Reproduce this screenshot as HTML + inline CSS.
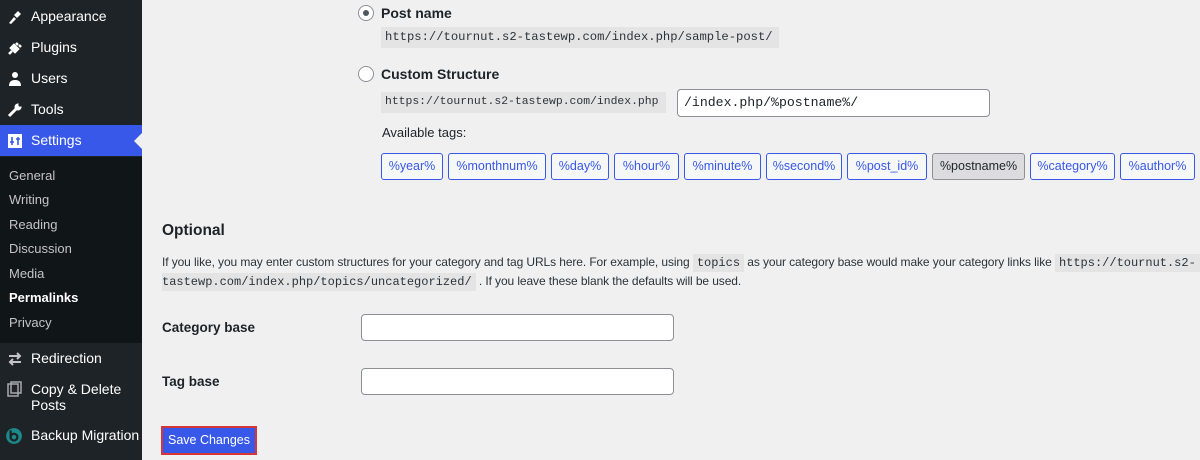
<!DOCTYPE html>
<html><head><meta charset="utf-8"><style>
*{box-sizing:border-box;margin:0;padding:0}
body{width:1200px;height:460px;overflow:hidden;background:#f0f0f1;font-family:"Liberation Sans",sans-serif;color:#1d2327;position:relative;font-size:13px}
.sb{position:absolute;left:0;top:0;width:142px;height:460px;background:#1d2327}
.mi{position:absolute;left:0;width:142px;color:#fff;font-size:14px;height:31px;line-height:31px;padding-left:31px}
.ic{position:absolute;left:7px;top:8px;width:16px;height:16px}
.sub{position:absolute;left:0;top:157px;width:142px;height:186px;background:#101517}
.si{position:absolute;left:9px;color:#c3c4c7;font-size:13px}
.a{position:absolute;white-space:nowrap}
code,.mono{font-family:"Liberation Mono",monospace;font-size:12.2px;white-space:nowrap}
.code{position:absolute;background:#e4e4e5;padding:0 4px;height:21px;line-height:21px;color:#2c3338}
.tag{position:absolute;top:153px;height:27px;border:1px solid #3858e9;border-radius:3px;background:#f6f7f7;color:#3858e9;font-size:12.5px;line-height:25px;text-align:center;white-space:nowrap}
.inp{position:absolute;background:#fff;border:1px solid #8c8f94;border-radius:4px}
.radio{position:absolute;width:16px;height:16px;border:1px solid #8c8f94;border-radius:50%;background:#fff}
</style></head><body>
<div class="sb">
 <div class="mi" style="top:1px"><svg class="ic" viewBox="0 0 16 16"><path d="M2 14l5-6 2 2-5 5zM7 6l4-4 3 3-4 4z" fill="#fff"/></svg>Appearance</div>
 <div class="mi" style="top:32px"><svg class="ic" viewBox="0 0 16 16"><path d="M2 14l3-3M4 8l4 4 3-3-4-4zM9 3l2 2M12 5l2 2" stroke="#fff" stroke-width="2.5" fill="#fff"/></svg>Plugins</div>
 <div class="mi" style="top:63px"><svg class="ic" viewBox="0 0 16 16"><circle cx="8" cy="4" r="3" fill="#fff"/><path d="M2 15c0-5 3-6 6-6s6 1 6 6z" fill="#fff"/></svg>Users</div>
 <div class="mi" style="top:94px"><svg class="ic" viewBox="0 0 16 16"><path d="M2 14l7-7" stroke="#fff" stroke-width="3"/><circle cx="11" cy="5" r="3.5" fill="#fff"/><circle cx="13" cy="3" r="1.6" fill="#1d2327"/></svg>Tools</div>
 <div class="mi" style="top:125px;background:#3858e9"><svg class="ic" viewBox="0 0 16 16"><rect x="1" y="1" width="14" height="14" fill="#fff"/><path d="M5 4v8M3 9h4M11 4v8M9 6h4" stroke="#3858e9" stroke-width="1.6"/></svg>Settings</div>
 <div style="position:absolute;left:134px;top:133px;width:0;height:0;border-top:8px solid transparent;border-bottom:8px solid transparent;border-right:8px solid #f0f0f1"></div>
 <div class="sub">
  <div class="si" style="top:11px">General</div>
  <div class="si" style="top:35px">Writing</div>
  <div class="si" style="top:60px">Reading</div>
  <div class="si" style="top:84px">Discussion</div>
  <div class="si" style="top:109px">Media</div>
  <div class="si" style="top:133px;color:#fff;font-weight:bold">Permalinks</div>
  <div class="si" style="top:158px">Privacy</div>
 </div>
 <div class="mi" style="top:343px"><svg class="ic" viewBox="0 0 16 16"><path d="M2 5h11M10 2l3 3-3 3M14 11H3M6 8l-3 3 3 3" stroke="#c3c4c7" stroke-width="2" fill="none"/></svg>Redirection</div>
 <div class="mi" style="top:374px;line-height:16px;height:40px;padding-top:7px"><svg class="ic" viewBox="0 0 16 16" style="top:7px"><rect x="1" y="3" width="10" height="12" fill="none" stroke="#a7aaad" stroke-width="1.5"/><rect x="4" y="1" width="10" height="11" fill="none" stroke="#a7aaad" stroke-width="1.5"/></svg>Copy &amp; Delete<br>Posts</div>
 <div class="mi" style="top:420px"><svg class="ic" viewBox="0 0 16 16" style="left:5px;width:18px;height:18px;top:7px"><circle cx="8" cy="8" r="7" fill="#1c8a8a"/><circle cx="8" cy="9" r="3" fill="none" stroke="#1d2327" stroke-width="2"/><path d="M5 3v6" stroke="#1d2327" stroke-width="2"/></svg>Backup Migration</div>
</div>

<div class="radio" style="left:358px;top:5px"><div style="position:absolute;left:4px;top:4px;width:6px;height:6px;border-radius:50%;background:#50575e"></div></div>
<div class="a" style="left:381px;top:5px;font-size:14px;font-weight:bold;color:#1d2327">Post name</div>
<div class="code mono" style="left:381px;top:27px;width:398px">https://tournut.s2-tastewp.com/index.php/sample-post/</div>
<div class="radio" style="left:358px;top:66px"></div>
<div class="a" style="left:381px;top:66px;font-size:14px;font-weight:bold">Custom Structure</div>
<div class="code mono" style="left:381px;top:92px;width:285px;font-size:11.4px">https://tournut.s2-tastewp.com/index.php</div>
<div class="inp mono" style="left:677px;top:89px;width:313px;height:28px;padding-left:6px;line-height:26px;font-size:13.2px">/index.php/%postname%/</div>
<div class="a" style="left:382px;top:125px">Available tags:</div>
<div class="tag" style="left:381px;width:62px">%year%</div>
<div class="tag" style="left:448px;width:98px">%monthnum%</div>
<div class="tag" style="left:551px;width:58px">%day%</div>
<div class="tag" style="left:614px;width:65px">%hour%</div>
<div class="tag" style="left:684px;width:77px">%minute%</div>
<div class="tag" style="left:766px;width:76px">%second%</div>
<div class="tag" style="left:847px;width:80px">%post_id%</div>
<div class="tag" style="left:932px;width:93px;background:#dcdcde;color:#1d2327;border-color:#8c8f94">%postname%</div>
<div class="tag" style="left:1030px;width:85px">%category%</div>
<div class="tag" style="left:1120px;width:75px">%author%</div>

<div class="a" style="left:162px;top:222px;font-size:15.5px;font-weight:bold">Optional</div>
<div class="a" style="left:162px;top:253px;line-height:19px;color:#2c3338;font-size:12px;letter-spacing:-0.1px">If you like, you may enter custom structures for your category and tag URLs here. For example, using <code style="background:#e4e4e5;padding:2px 4px;font-size:12px;letter-spacing:0">topics</code> as your category base would make your category links like <code style="background:#e4e4e5;padding:2px 4px;font-size:12px;letter-spacing:0">https://tournut.s2-</code></div>
<div class="a" style="left:162px;top:272px;line-height:19px;color:#2c3338;font-size:12px;letter-spacing:-0.1px"><code style="background:#e4e4e5;padding:2px 4px 2px 0;font-size:12px;letter-spacing:0">tastewp.com/index.php/topics/uncategorized/</code> . If you leave these blank the defaults will be used.</div>
<div class="a" style="left:162px;top:320px;font-size:13.5px;font-weight:bold">Category base</div>
<div class="inp" style="left:361px;top:314px;width:313px;height:27px"></div>
<div class="a" style="left:162px;top:374px;font-size:13.5px;font-weight:bold">Tag base</div>
<div class="inp" style="left:361px;top:368px;width:313px;height:27px"></div>
<div class="a" style="left:161px;top:426px;width:96px;height:29px;border:2px solid #d63638;background:#3858e9;color:#fff;font-size:12.5px;text-align:center;line-height:25px">Save Changes</div>
</body></html>
